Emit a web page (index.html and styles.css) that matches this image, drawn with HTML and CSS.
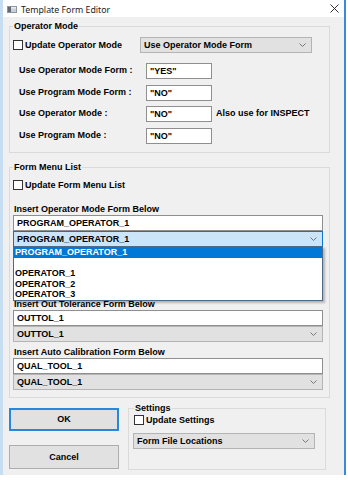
FILE: index.html
```html
<!DOCTYPE html>
<html>
<head>
<meta charset="utf-8">
<title>Template Form Editor</title>
<link rel="stylesheet" href="styles.css">
</head>
<body>
<div class="window">
  <div class="titlebar">
    <svg class="app-icon" width="10" height="7" viewBox="0 0 10 7">
      <rect x="0.5" y="0.5" width="9" height="6" fill="#c9d0d8" stroke="#8c96a0"/>
      <rect x="1" y="1" width="3" height="5" fill="#5f6b77"/>
      <rect x="4" y="1" width="5" height="1.5" fill="#e9edf1"/>
    </svg>
    <span class="title">Template Form Editor</span>
    <svg class="close" width="9" height="9" viewBox="0 0 9 9">
      <path d="M0.5 0.5 L8.5 8.5 M8.5 0.5 L0.5 8.5" stroke="#333" stroke-width="1" fill="none"/>
    </svg>
  </div>
  <div class="client">
    <fieldset class="group g-operator">
      <legend>Operator Mode</legend>
      <div class="top-row">
        <div class="check"><span class="box"></span>Update Operator Mode</div>
        <div class="combo combo-top">Use Operator Mode Form<svg class="chev" width="7" height="4" viewBox="0 0 7 4"><path d="M0.5 0.5 L3.5 3.5 L6.5 0.5" stroke="#777" fill="none"/></svg></div>
      </div>
      <div class="frow first"><span class="flabel">Use Operator Mode Form :</span><div class="tbox short">"YES"</div></div>
      <div class="frow"><span class="flabel">Use Program Mode Form :</span><div class="tbox short">"NO"</div></div>
      <div class="frow"><span class="flabel">Use Operator Mode :</span><div class="tbox short">"NO"</div><span class="note">Also use for INSPECT</span></div>
      <div class="frow"><span class="flabel">Use Program Mode :</span><div class="tbox short">"NO"</div></div>
    </fieldset>

    <fieldset class="group g-menu">
      <legend>Form Menu List</legend>
      <div class="check menu-check"><span class="box"></span>Update Form Menu List</div>
      <div class="section first">
        <div class="slabel">Insert Operator Mode Form Below</div>
        <div class="tbox wide">PROGRAM_OPERATOR_1</div>
        <div class="combo wide focused">PROGRAM_OPERATOR_1<svg class="chev" width="7" height="4" viewBox="0 0 7 4"><path d="M0.5 0.5 L3.5 3.5 L6.5 0.5" stroke="#777" fill="none"/></svg>
          <div class="droplist">
            <div class="item sel">PROGRAM_OPERATOR_1</div>
            <div class="item"></div>
            <div class="item">OPERATOR_1</div>
            <div class="item">OPERATOR_2</div>
            <div class="item">OPERATOR_3</div>
          </div>
        </div>
      </div>
      <div class="section spacer"></div>
      <div class="section">
        <div class="slabel">Insert Out Tolerance Form Below</div>
        <div class="tbox wide">OUTTOL_1</div>
        <div class="combo wide">OUTTOL_1<svg class="chev" width="7" height="4" viewBox="0 0 7 4"><path d="M0.5 0.5 L3.5 3.5 L6.5 0.5" stroke="#777" fill="none"/></svg></div>
      </div>
      <div class="section">
        <div class="slabel">Insert Auto Calibration Form Below</div>
        <div class="tbox wide">QUAL_TOOL_1</div>
        <div class="combo wide">QUAL_TOOL_1<svg class="chev" width="7" height="4" viewBox="0 0 7 4"><path d="M0.5 0.5 L3.5 3.5 L6.5 0.5" stroke="#777" fill="none"/></svg></div>
      </div>
    </fieldset>

    <div class="bottom">
      <div class="buttons">
        <div class="btn default">OK</div>
        <div class="btn cancel">Cancel</div>
      </div>
      <fieldset class="group settings">
        <legend>Settings</legend>
        <div class="check menu-check"><span class="box"></span>Update Settings</div>
        <div class="combo set-combo">Form File Locations<svg class="chev" width="7" height="4" viewBox="0 0 7 4"><path d="M0.5 0.5 L3.5 3.5 L6.5 0.5" stroke="#777" fill="none"/></svg></div>
      </fieldset>
    </div>
  </div>
</div>
</body>
</html>
```

FILE: styles.css
```css
body {
  margin: 0;
  background: #ffffff;
  font-family: "Liberation Sans", Arial, sans-serif;
  font-size: 9px;
  font-weight: bold;
  color: #000;
}

.window {
  box-sizing: border-box;
  width: 346px;
  height: 475px;
  border-left: 3px solid #c6ddf2;
  border-right: 2px solid #3b8ad9;
  background: #f0f0f0;
  display: flex;
  flex-direction: column;
}

.titlebar {
  height: 17px;
  flex: none;
  background: #ffffff;
  display: flex;
  align-items: center;
  padding-left: 4px;
}

.app-icon {
  margin-right: 4px;
  margin-top: 2px;
}

.title {
  font-family: "Noto Sans", "Liberation Sans", sans-serif;
  font-weight: normal;
  font-size: 8.8px;
  color: #222;
  margin-top: 2px;
}

.close {
  margin-left: auto;
  margin-right: 5px;
}

.client {
  flex: 1;
  padding: 4px 0 0 6px;
}

.group {
  box-sizing: border-box;
  margin: 0;
  min-width: 0;
  border: 1px solid #dadada;
}

.group legend {
  padding: 0 1px;
  line-height: 11px;
}

.g-operator {
  width: 321px;
  padding: 5px 0 8px 3px;
}

.check {
  display: flex;
  align-items: center;
}

.box {
  box-sizing: border-box;
  width: 10px;
  height: 10px;
  border: 1px solid #333;
  background: #fff;
  margin-right: 2px;
}

.top-row {
  display: flex;
  align-items: center;
  height: 16px;
}

.top-row .check {
  width: 127px;
}

.combo {
  box-sizing: border-box;
  height: 16px;
  border: 1px solid #b4b4b4;
  background: #e1e1e1;
  display: flex;
  align-items: center;
  padding-left: 3px;
  position: relative;
}

.chev {
  margin-left: auto;
  margin-right: 5px;
}

.combo-top {
  width: 172px;
}

.frow {
  display: flex;
  height: 16px;
  margin-top: 5.5px;
  padding-left: 6px;
}

.frow.first {
  margin-top: 10px;
}

.flabel {
  width: 127px;
  line-height: 15px;
}

.tbox {
  box-sizing: border-box;
  height: 16px;
  border: 1px solid #8f8f8f;
  background: #ffffff;
  padding-left: 3px;
  line-height: 15px;
}

.tbox.short {
  width: 66px;
}

.note {
  margin-left: 4px;
  line-height: 15px;
}

.g-menu {
  width: 321px;
  margin-top: 9px;
  padding: 6px 0 7px 3px;
}

.menu-check {
  height: 12px;
}

.section {
  margin-top: 4.5px;
}

.section.first {
  margin-top: 13.5px;
}

.spacer {
  height: 43px;
}

.slabel {
  line-height: 11px;
  padding-left: 1px;
}

.wide {
  width: 310px;
}

.combo.focused {
  background: #cce4f7;
  border-color: #0a74cf;
}

.droplist {
  position: absolute;
  left: -1px;
  top: 100%;
  width: 310px;
  box-sizing: border-box;
  border: 1px solid #4f6988;
  background: #ffffff;
  box-shadow: 2px 2px 2px rgba(0, 0, 0, 0.25);
  z-index: 2;
}

.item {
  height: 10.5px;
  line-height: 10.5px;
  padding-left: 1px;
}

.item.sel {
  background: #0078d7;
  color: #ffffff;
}

.bottom {
  display: flex;
  margin-top: 5px;
}

.buttons {
  width: 110px;
  padding-top: 5px;
  display: flex;
  flex-direction: column;
}

.btn {
  box-sizing: border-box;
  height: 23px;
  border: 1px solid #adadad;
  background: #e1e1e1;
  display: flex;
  align-items: center;
  justify-content: center;
}

.btn.default {
  border: 2px solid #2a86d8;
}

.btn.cancel {
  margin-top: 14px;
  height: 24px;
}

.settings {
  width: 198px;
  margin-left: 9px;
  padding: 0 0 20px 5px;
}

.set-combo {
  width: 182px;
  margin-left: -1px;
  margin-top: 7px;
}
```
